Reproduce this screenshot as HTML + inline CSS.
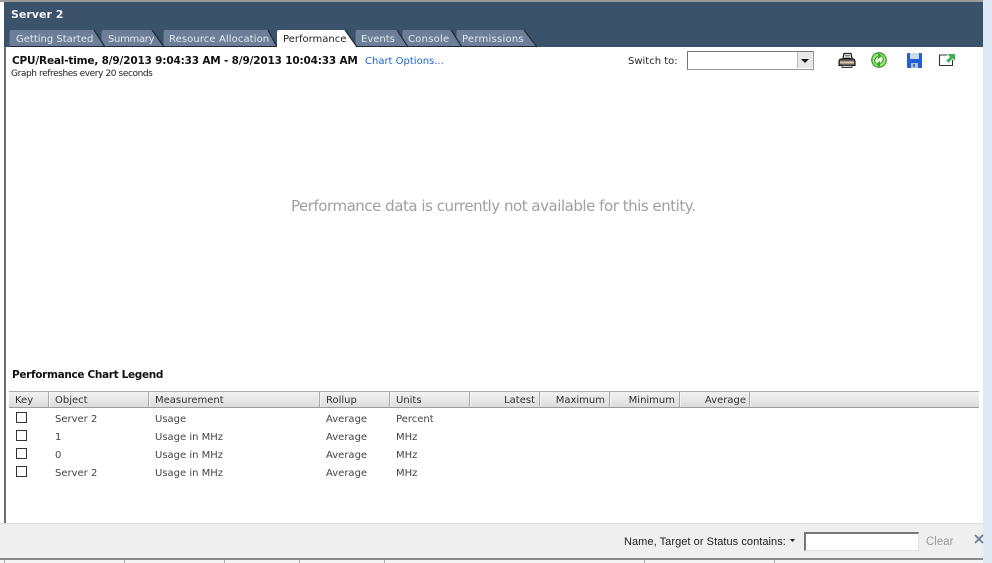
<!DOCTYPE html>
<html><head><meta charset="utf-8">
<style>
html,body{margin:0;padding:0;background:#fff;}
#r{position:relative;width:992px;height:563px;overflow:hidden;background:#fff;font-family:"DejaVu Sans",sans-serif;font-size:10px;color:#333;}
#r div,#r svg{position:absolute;}
.t{white-space:nowrap;line-height:12px;}
.tab{font-size:10px;color:#e4e8ee;line-height:14px;white-space:nowrap;}
.h{font-size:10px;color:#333;white-space:nowrap;line-height:12px;top:395px;}
.hs{top:392px;width:1px;height:15px;background:#aaa;border-right:1px solid #f4f4f4;}
.c{font-size:10px;color:#444;white-space:nowrap;line-height:12px;}
.cb{left:16px;width:9px;height:9px;border:1px solid #333;background:#fff;}
</style></head><body>
<div id="r">
<div style="left:0;top:0;width:992px;height:2px;background:#9a9a9a"></div>
<div style="left:983px;top:0;width:9px;height:563px;background:#dfe9f5"></div>
<div style="left:4px;top:2px;width:979px;height:45px;background:#3b526b"></div>
<div style="left:4px;top:47px;width:2px;height:476px;background:#6e6e6e"></div>
<div class="t" style="left:11px;top:8px;font:bold 11px/13px 'DejaVu Sans',sans-serif;color:#f2f4f7;">Server 2</div>

<svg style="left:0;top:0" width="992" height="48">
<g fill="#6d7f98">
<path d="M9.500 47V32q0-2 2-2H94l11 17z"/>
<path d="M101.500 47V32q0-2 2-2H152l12 17z"/>
<path d="M163.500 47V32q0-2 2-2H268l9 17z"/>
<path d="M355.500 47V32q0-2 2-2H397l11 17z"/>
<path d="M402.500 47V32q0-2 2-2H451l11 17z"/>
<path d="M456.500 47V32q0-2 2-2H524l13 17z"/>
</g>
<g fill="none" stroke="#1f2a36" stroke-width="1.200">
<path d="M94 30l11 17M152 30l12 17M268 30l9 17M397 30l11 17M451 30l11 17M524 30l13 17"/>
</g>
<path d="M277 47V32q0-2 2-2H345l12 17z" fill="#fff"/>
<path d="M345 30l12 17" stroke="#1f2a36" stroke-width="1.200" fill="none"/>
<path d="M9 46.500H277M357 46.500H537" stroke="#1f2a36" stroke-width="1"/>
</svg>
<div class="tab" style="left:16px;top:33px">Getting Started</div>
<div class="tab" style="left:108px;top:33px;letter-spacing:-0.3px">Summary</div>
<div class="tab" style="left:169px;top:33px;letter-spacing:0.1px">Resource Allocation</div>
<div class="tab" style="left:283px;top:33px;color:#222">Performance</div>
<div class="tab" style="left:361px;top:33px">Events</div>
<div class="tab" style="left:408px;top:33px;letter-spacing:0.25px">Console</div>
<div class="tab" style="left:462px;top:33px;letter-spacing:0.25px">Permissions</div>

<div class="t" style="left:12px;top:54px;font:bold 10.500px/14px 'DejaVu Sans',sans-serif;color:#111;letter-spacing:-0.18px">CPU/Real-time, 8/9/2013 9:04:33 AM - 8/9/2013 10:04:33 AM</div>
<div class="t" style="left:365px;top:56px;font-size:10px;color:#1f62c8;">Chart Options...</div>
<div class="t" style="left:11px;top:68px;font:9px/12px 'DejaVu Sans',sans-serif;color:#222;letter-spacing:-0.41px">Graph refreshes every 20 seconds</div>
<div class="t" style="left:628px;top:56px;font-size:10px;color:#222;">Switch to:</div>

<div style="left:687px;top:51px;width:125px;height:17px;border:1px solid #9a9a9a;border-top-color:#777;border-left-color:#777;background:#fff"></div>
<div style="left:797px;top:52px;width:15px;height:16px;background:#e8e8e8;border-left:1px solid #bbb"></div>
<svg style="left:797px;top:52px" width="16" height="16"><path d="M4 7h8l-4 4z" fill="#111"/></svg>

<svg style="left:838px;top:52px" width="18" height="18" viewBox="0 0 18 18">
<path d="M6 1.500h7l1 5H5z" fill="#fff" stroke="#222" stroke-width="1.300"/>
<path d="M7 3.500h5M7 5h5" stroke="#555" stroke-width=".8"/>
<path d="M2 7h14l1 2v4.500H1V9z" fill="#666" stroke="#111" stroke-width="1.100"/>
<path d="M2 10.500h14" stroke="#d8d2a0" stroke-width="2"/>
<path d="M4 13.500h10v2H4z" fill="#ddd" stroke="#333" stroke-width=".9"/>
</svg>
<svg style="left:870px;top:51px" width="18" height="18" viewBox="0 0 18 18">
<circle cx="9" cy="9" r="7.200" fill="#fff" stroke="#2f9a2a" stroke-width="1.300"/>
<circle cx="9" cy="9" r="5.300" fill="#e8f7dc" stroke="#a2e070" stroke-width="2.600"/>
<path d="M5.500 12.500C3.500 9 6 5.500 9 5.500M12.500 5.500C14.500 9 12 12.500 9 12.500" fill="none" stroke="#2f9a2a" stroke-width="1"/>
<path d="M8 1.500l4 3.500-4 3zM10 16.500l-4-3.500 4-3z" fill="#37a52f"/>
</svg>
<svg style="left:906px;top:52px" width="17" height="17" viewBox="0 0 17 17">
<path d="M1 2q0-1 1-1h13q1 0 1 1v14H2q-1 0-1-1z" fill="#1f5fd8"/>
<path d="M4 1h9v6H4z" fill="#cfd8e8"/>
<path d="M5 11h7v5H5z" fill="#b8c0cc"/>
<path d="M7 12h2v3H7z" fill="#3a6fd8"/>
</svg>
<svg style="left:938px;top:52px" width="18" height="16" viewBox="0 0 18 16">
<path d="M9 3H1.500v10.500h13V8" fill="#fff" stroke="#333" stroke-width="1.100"/>
<path d="M8 9l4-4-2.500-3H17v7l-2.500-2.500-3.500 4z" fill="#3fb05a"/>
</svg>

<div class="t" style="left:291px;top:197px;font-size:15px;line-height:19px;color:#9f9f9f;letter-spacing:-0.47px">Performance data is currently not available for this entity.</div>

<div class="t" style="left:12px;top:368px;font:bold 10.500px/14px 'DejaVu Sans',sans-serif;color:#111;letter-spacing:-0.33px">Performance Chart Legend</div>

<div style="left:9px;top:391px;width:970px;height:17px;background:linear-gradient(#f2f2f2,#dcdcdc);border-top:1px solid #aaa;box-sizing:border-box;border-bottom:1px solid #9c9c9c"></div>
<div class="hs" style="left:48px"></div><div class="hs" style="left:148px"></div><div class="hs" style="left:319px"></div><div class="hs" style="left:389px"></div><div class="hs" style="left:469px"></div><div class="hs" style="left:539px"></div><div class="hs" style="left:609px"></div><div class="hs" style="left:679px"></div><div class="hs" style="left:749px"></div>
<div class="h" style="left:15px">Key</div>
<div class="h" style="left:55px">Object</div>
<div class="h" style="left:155px">Measurement</div>
<div class="h" style="left:326px">Rollup</div>
<div class="h" style="left:396px">Units</div>
<div class="h" style="left:435px;width:100px;text-align:right">Latest</div>
<div class="h" style="left:505px;width:100px;text-align:right">Maximum</div>
<div class="h" style="left:575px;width:100px;text-align:right">Minimum</div>
<div class="h" style="left:646px;width:100px;text-align:right">Average</div>

<div class="cb" style="top:412px"></div><div class="cb" style="top:430px"></div><div class="cb" style="top:448px"></div><div class="cb" style="top:466px"></div>
<div class="c" style="left:55px;top:414px">Server 2</div><div class="c" style="left:155px;top:414px">Usage</div><div class="c" style="left:326px;top:414px">Average</div><div class="c" style="left:396px;top:414px">Percent</div>
<div class="c" style="left:55px;top:432px">1</div><div class="c" style="left:155px;top:432px">Usage in MHz</div><div class="c" style="left:326px;top:432px">Average</div><div class="c" style="left:396px;top:432px">MHz</div>
<div class="c" style="left:55px;top:450px">0</div><div class="c" style="left:155px;top:450px">Usage in MHz</div><div class="c" style="left:326px;top:450px">Average</div><div class="c" style="left:396px;top:450px">MHz</div>
<div class="c" style="left:55px;top:468px">Server 2</div><div class="c" style="left:155px;top:468px">Usage in MHz</div><div class="c" style="left:326px;top:468px">Average</div><div class="c" style="left:396px;top:468px">MHz</div>

<div style="left:0;top:523px;width:983px;height:35px;background:#efefef;border-top:1px solid #dcdcdc;box-sizing:border-box"></div>
<div style="left:0;top:558px;width:983px;height:2px;background:#8a8a8a"></div>
<div style="left:0;top:560px;width:983px;height:3px;background:#f4f4f4"></div>
<div style="left:4px;top:560px;width:1px;height:3px;background:#aaa"></div><div style="left:124px;top:560px;width:1px;height:3px;background:#aaa"></div><div style="left:224px;top:560px;width:1px;height:3px;background:#aaa"></div><div style="left:299px;top:560px;width:1px;height:3px;background:#aaa"></div><div style="left:384px;top:560px;width:1px;height:3px;background:#aaa"></div><div style="left:644px;top:560px;width:1px;height:3px;background:#aaa"></div><div style="left:774px;top:560px;width:1px;height:3px;background:#aaa"></div>

<div class="t" style="left:624px;top:535px;font:11px/14px 'Liberation Sans',sans-serif;color:#222;letter-spacing:0.06px">Name, Target or Status contains:</div>
<svg style="left:789px;top:538px" width="8" height="6"><path d="M1 1h5L3.500 4z" fill="#222"/></svg>
<div style="left:804px;top:532px;width:115px;height:19px;box-sizing:border-box;background:#fff;border:1px solid #e2e2e2;border-top:2px solid #777;border-left:2px solid #777"></div>
<div class="t" style="left:926px;top:535px;font:11.500px/14px 'Liberation Sans',sans-serif;color:#9a9a9a;">Clear</div>
<svg style="left:974px;top:534px" width="11" height="11"><path d="M1 1l8 8M9 1l-8 8" stroke="#667a90" stroke-width="1.700"/></svg>
</div>
</body></html>
